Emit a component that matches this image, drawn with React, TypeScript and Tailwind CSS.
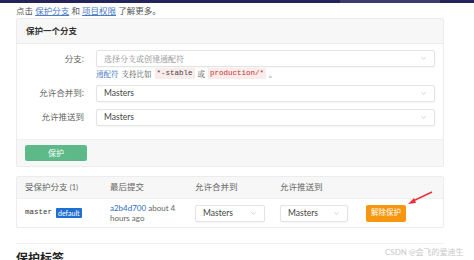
import { ChevronDown } from 'lucide-react'

const font = { fontFamily: 'Lato, "Noto Sans CJK SC", sans-serif' }

function Select({ value, placeholder, className }: { value?: string; placeholder?: string; className: string }) {
  return (
    <div className={`flex items-center justify-between border border-[#e3e3e3] rounded-[2px] bg-white px-[7px] shadow-[0_1px_2px_rgba(0,0,0,0.04)] ${className}`}>
      {value ? (
        <span className="text-[8.5px] text-[#444]">{value}</span>
      ) : (
        <span className="text-[8px] text-[#888]" style={{ fontFamily: '"Noto Serif CJK SC", "Noto Sans CJK SC", serif' }}>{placeholder}</span>
      )}
      <ChevronDown className="w-[7px] h-[7px] text-[#aaa]" strokeWidth={2} />
    </div>
  )
}

export default function App() {
  return (
    <div className="relative w-[474px] h-[260px] overflow-hidden bg-white" style={font}>
      {/* top bar */}
      <div className="flex h-[3px] bg-[#25245a]">
        <div className="w-[340px]" />
        <div className="w-[100px] bg-[#3b3b6e]" />
      </div>

      <div className="pl-[16px] w-[444px]">
        <p className="text-[8.5px] text-[#555] leading-[12px] mt-[2px]">
          点击 <span className="text-[#4a7bc4] underline">保护分支</span> 和 <span className="text-[#4a7bc4] underline">项目权限</span> 了解更多。
        </p>

        {/* protect a branch card */}
        <div className="mt-[1px] border border-[#ececec] rounded-[2px]">
          <div className="h-[25px] bg-[#f7f7f7] border-b border-[#ececec] flex items-center pl-[9px] text-[8.5px] font-bold text-[#333]">
            保护一个分支
          </div>
          <div className="bg-white pt-[6px] pb-[13px] pr-[8px] flex flex-col">
            <div className="flex">
              <div className="w-[67px] text-right text-[8.5px] text-[#666] pt-[3px]">分支:</div>
              <div className="ml-[12px] flex-1 flex flex-col">
                <Select placeholder="选择分支或创建通配符" className="h-[17px]" />
                <div className="mt-[1px] text-[7.5px] text-[#555] leading-[11px] flex items-center gap-[3px]" style={{ fontFamily: '"Noto Serif CJK SC", "Noto Sans CJK SC", serif' }}>
                  <span className="text-[#2f6cc0]">通配符</span>
                  <span>支持比如</span>
                  <code className="bg-[#fbecec] px-[2px] text-[#444] font-['Liberation_Mono',monospace] text-[7.5px]">*-stable</code>
                  <span>或</span>
                  <code className="bg-[#fbecec] px-[2px] text-[#c4302b] font-['Liberation_Mono',monospace] text-[7.5px]">production/*</code>
                  <span>。</span>
                </div>
              </div>
            </div>
            <div className="flex items-center mt-[6px]">
              <div className="w-[67px] text-right text-[8.5px] text-[#666]">允许合并到:</div>
              <Select value="Masters" className="ml-[12px] flex-1 h-[17px]" />
            </div>
            <div className="flex items-center mt-[7px]">
              <div className="w-[67px] text-right text-[8.5px] text-[#666]">允许推送到</div>
              <Select value="Masters" className="ml-[12px] flex-1 h-[17px]" />
            </div>
          </div>
          <div className="h-[27px] bg-[#f7f7f7] border-t border-[#f0f0f0] flex items-center pl-[8px]">
            <button className="w-[62px] h-[16px] rounded-[2px] bg-[#5dba88] text-white text-[8px]">保护</button>
          </div>
        </div>

        {/* protected branches table */}
        <div className="mt-[9px] border border-[#ececec] rounded-[2px] text-[8.5px] text-[#666]">
          <div className="h-[21px] bg-[#f7f7f7] flex items-center">
            <div className="w-[93px] pl-[8px]">受保护分支 <span className="text-[7.5px]">(1)</span></div>
            <div className="w-[85px]">最后提交</div>
            <div className="w-[85px]">允许合并到</div>
            <div className="w-[86px]">允许推送到</div>
          </div>
          <div className="h-[29px] flex items-center border-t border-[#f0f0f0]">
            <div className="w-[93px] pl-[8px] flex items-center gap-[4px]">
              <span className="font-['Liberation_Mono',monospace] text-[7.5px] text-[#333]">master</span>
              <span className="bg-[#1f6fd0] text-white text-[7px] px-[2px] leading-[10px] rounded-[1px]">default</span>
            </div>
            <div className="w-[85px] leading-[10px] text-[8px]">
              <span className="text-[#2f6cc0]">a2b4d700</span> about 4<br />hours ago
            </div>
            <div className="w-[85px]">
              <Select value="Masters" className="w-[70px] h-[17px]" />
            </div>
            <div className="w-[86px]">
              <Select value="Masters" className="w-[68px] h-[17px]" />
            </div>
            <button className="w-[40px] h-[17px] rounded-[2px] bg-[#f7960f] text-white text-[7.5px]">解除保护</button>
          </div>
        </div>

        <div className="mt-[15px] border-t border-[#f2f2f2] pt-[6px] text-[12px] font-bold text-[#222]">保护标签</div>
      </div>

      {/* red arrow */}
      <svg className="absolute left-[404px] top-[190px]" width="30" height="16" viewBox="0 0 30 16">
        <line x1="28" y1="2" x2="9" y2="11" stroke="#e8333a" strokeWidth="1.4" />
        <polygon points="4,14 10,8 12,13" fill="#e8333a" />
      </svg>

      {/* watermark */}
      <div className="absolute left-[385px] top-[246px] text-[8px] text-[#c8c8c8]">CSDN @会飞的爱迪生</div>
    </div>
  )
}
